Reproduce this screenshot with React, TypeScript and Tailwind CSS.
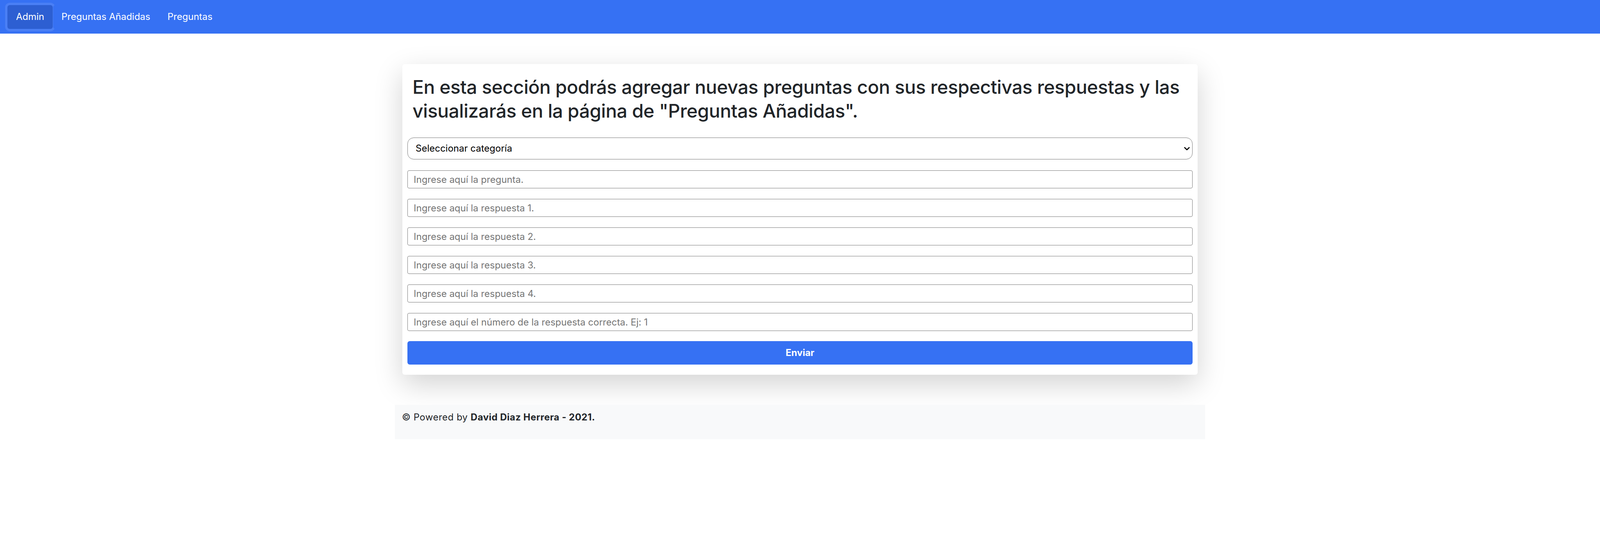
import React from "react";

const fields = [
  "Ingrese aquí la pregunta.",
  "Ingrese aquí la respuesta 1.",
  "Ingrese aquí la respuesta 2.",
  "Ingrese aquí la respuesta 3.",
  "Ingrese aquí la respuesta 4.",
  "Ingrese aquí el número de la respuesta correcta. Ej: 1",
];

function Navbar() {
  return (
    <nav className="flex h-[86px] items-center bg-[#3671f3] pl-[19px] text-[24px] text-white">
      <a
        href="#"
        className="flex h-[61px] items-center rounded-[6px] bg-[#2d5fd2] px-[22px] shadow-[0_0_0_6px_#4a7ff5]"
      >
        Admin
      </a>
      {/* sits over the right edge of the focus ring, like the original */}
      <a
        href="#"
        className="relative ml-[1px] flex h-[61px] items-center rounded-[6px] bg-[#3671f3] pl-[21px] pr-[22px]"
      >
        Preguntas Añadidas
      </a>
      <a href="#" className="flex h-[61px] items-center px-[22px]">
        Preguntas
      </a>
    </nav>
  );
}

function CategorySelect() {
  return (
    <div className="relative">
      <select
        defaultValue=""
        className="h-[56px] w-full appearance-none rounded-[16px] border-[1.6px] border-[#767676] bg-white pl-[20px] pr-[32px] text-[24px] text-black outline-none"
      >
        <option value="">Seleccionar categoría</option>
      </select>
      <svg
        viewBox="0 0 15 9"
        className="pointer-events-none absolute right-[7px] top-[24px] h-[9px] w-[15px]"
        aria-hidden
      >
        <path
          d="M1.8 1.8 L7.5 7.2 L13.2 1.8"
          fill="none"
          stroke="#000"
          strokeWidth="2.8"
          strokeLinecap="round"
          strokeLinejoin="round"
        />
      </svg>
    </div>
  );
}

export default function App() {
  return (
    <div className="bg-white font-['Inter','Noto_Sans',sans-serif] text-[#212529]">
      <Navbar />

      <div className="mx-auto w-[2074px]">
        <div className="mx-[19px] mt-[78px] rounded-[6px] bg-white px-[13px] pb-[26px] pt-[13px] shadow-[0_24px_72px_rgba(0,0,0,0.175)]">
          <h3 className="mb-[38px] px-[13px] pt-[15px] text-[48px] font-medium leading-[61px] tracking-[-0.01em] text-[#212529]">
            <span className="block whitespace-nowrap">
              En esta sección podrás agregar nuevas preguntas con sus respectivas respuestas y las
            </span>
            <span className="block whitespace-nowrap">
              visualizarás en la página de "Preguntas Añadidas".
            </span>
          </h3>

          <form className="flex flex-col">
            <CategorySelect />

            <div className="mt-[28px] flex flex-col gap-[27px]">
              {fields.map((placeholder) => (
                <input
                  key={placeholder}
                  type="text"
                  placeholder={placeholder}
                  className="h-[46px] w-full rounded-[4px] border-[1.6px] border-[#767676] bg-white px-[15px] text-[24px] text-black outline-none placeholder:text-[#757575]"
                />
              ))}
            </div>

            <button
              type="button"
              className="mt-[26px] h-[60px] w-full rounded-[6px] bg-[#3671f3] text-[24px] font-bold text-white"
            >
              Enviar
            </button>
          </form>
        </div>

        <footer className="mt-[77px] bg-[#f8f9fa] px-[18px] pb-[14px] pt-[14px] text-[24px] leading-[36px] tracking-[0.02em]">
          <p className="mb-[24px]">
            © Powered by <b className="font-bold">David Diaz Herrera - 2021.</b>
          </p>
        </footer>
      </div>
    </div>
  );
}
